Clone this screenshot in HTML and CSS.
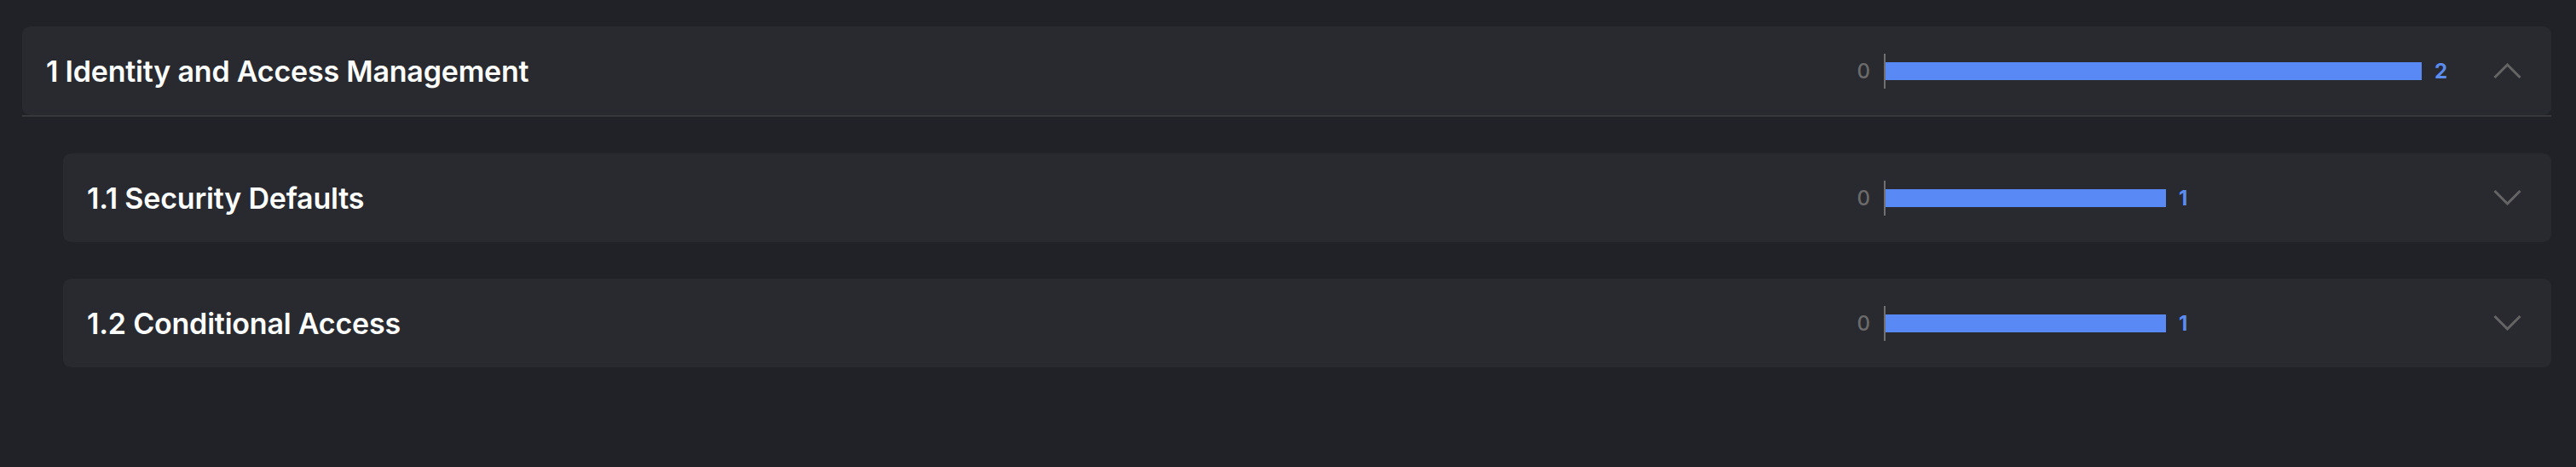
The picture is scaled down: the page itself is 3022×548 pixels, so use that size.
FILE: index.html
```html
<!DOCTYPE html>
<html lang="en">
<head>
<meta charset="utf-8">
<title>Sections</title>
<link rel="stylesheet" href="styles.css">
</head>
<body>
<main class="page">
  <section class="section">
    <div class="head-wrap">
      <div class="row">
        <h2 class="title">1 Identity and Access Management</h2>
        <div class="chart">
          <span class="zero">0</span>
          <div class="track">
            <div class="fill" style="width:629px"></div>
            <span class="val">2</span>
          </div>
        </div>
        <svg class="chev" viewBox="0 0 33 18" width="33" height="18" aria-hidden="true"><path d="M1.5 17 L16.5 2 L31.5 17" fill="none" stroke="#646464" stroke-width="3"/></svg>
      </div>
    </div>
    <div class="children">
      <div class="row">
        <h3 class="title">1.1 Security Defaults</h3>
        <div class="chart">
          <span class="zero">0</span>
          <div class="track">
            <div class="fill" style="width:329px"></div>
            <span class="val">1</span>
          </div>
        </div>
        <svg class="chev" viewBox="0 0 33 18" width="33" height="18" aria-hidden="true"><path d="M1.5 1 L16.5 16 L31.5 1" fill="none" stroke="#646464" stroke-width="3"/></svg>
      </div>
      <div class="row">
        <h3 class="title">1.2 Conditional Access</h3>
        <div class="chart">
          <span class="zero">0</span>
          <div class="track">
            <div class="fill" style="width:329px"></div>
            <span class="val">1</span>
          </div>
        </div>
        <svg class="chev" viewBox="0 0 33 18" width="33" height="18" aria-hidden="true"><path d="M1.5 1 L16.5 16 L31.5 1" fill="none" stroke="#646464" stroke-width="3"/></svg>
      </div>
    </div>
  </section>
</main>
</body>
</html>
```

FILE: styles.css
```css
html, body {
  margin: 0;
  padding: 0;
  background: #202227;
  height: 100%;
}

body {
  font-family: Inter, "Noto Sans", "Liberation Sans", sans-serif;
  color: #ffffff;
}

.page {
  padding: 31px 29px 0 26px;
}

.head-wrap {
  border-bottom: 2px solid #38383b;
}

.row {
  display: flex;
  align-items: center;
  height: 104px;
  padding: 0 35px 0 28px;
  background: #282a30;
  border-radius: 9px;
  box-sizing: border-box;
}

.title {
  flex: 1;
  margin: 0;
  font-size: 34px;
  font-weight: 600;
  letter-spacing: -0.2px;
  color: #ffffff;
}

.children {
  display: flex;
  flex-direction: column;
  gap: 43px;
  padding: 43px 0 0 48px;
}

.chart {
  display: flex;
  align-items: center;
}

.zero {
  font-size: 24px;
  font-weight: 500;
  color: #6b6b6b;
  margin-right: 16px;
}

.track {
  display: flex;
  align-items: center;
  width: 691px;
  height: 41px;
  border-left: 2px solid #707070;
  box-sizing: border-box;
}

.fill {
  height: 21px;
  background: #5889f5;
}

.val {
  margin-left: 15px;
  font-size: 24px;
  font-weight: 700;
  color: #5b8cf2;
}

.chev {
  display: block;
  margin-left: 24px;
  flex: none;
}
```
